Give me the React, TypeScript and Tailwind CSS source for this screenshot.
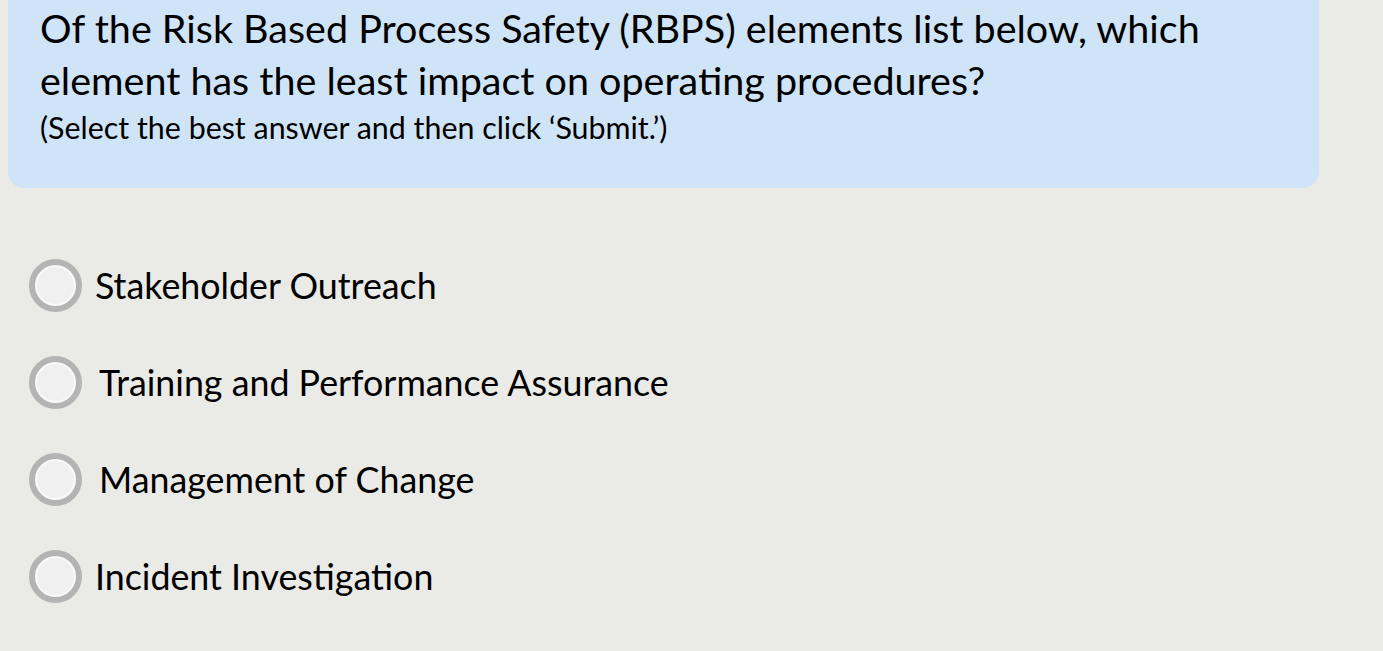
const options = [
  { label: "Stakeholder Outreach", gap: "gap-[13px]" },
  { label: "Training and Performance Assurance", gap: "gap-[17px]" },
  { label: "Management of Change", gap: "gap-[17px]" },
  { label: "Incident Investigation", gap: "gap-[13px]" },
];

export default function App() {
  return (
    <main
      className="min-h-screen w-full bg-[#eaeae6] text-black overflow-hidden"
      style={{ fontFamily: "Lato, 'Noto Sans', sans-serif" }}
    >
      <div className="ml-2 w-[1311px] h-[188px] rounded-b-2xl bg-[#cfe4f7] pl-8 pt-[2px]">
        <h1 className="text-[39.5px] leading-[52px] font-normal w-[1250px]">
          Of the Risk Based Process Safety (RBPS) elements list below, which
          element has the least impact on operating procedures?
        </h1>
        <p className="mt-1 text-[30.4px] leading-[34px]">
          (Select the best answer and then click ‘Submit.’)
        </p>
      </div>

      <ul className="mt-[49px] flex flex-col">
        {options.map((o) => (
          <li key={o.label} className={`h-[97px] flex items-center pl-[29px] ${o.gap}`}>
            <span className="w-[53px] h-[53px] rounded-full border-[6px] border-[#b4b4b4] bg-[#f0f0f0] shadow-[inset_0_0_0_2px_#fafafa]" />
            <span className="text-[35.8px] leading-[40px]">{o.label}</span>
          </li>
        ))}
      </ul>
    </main>
  );
}
